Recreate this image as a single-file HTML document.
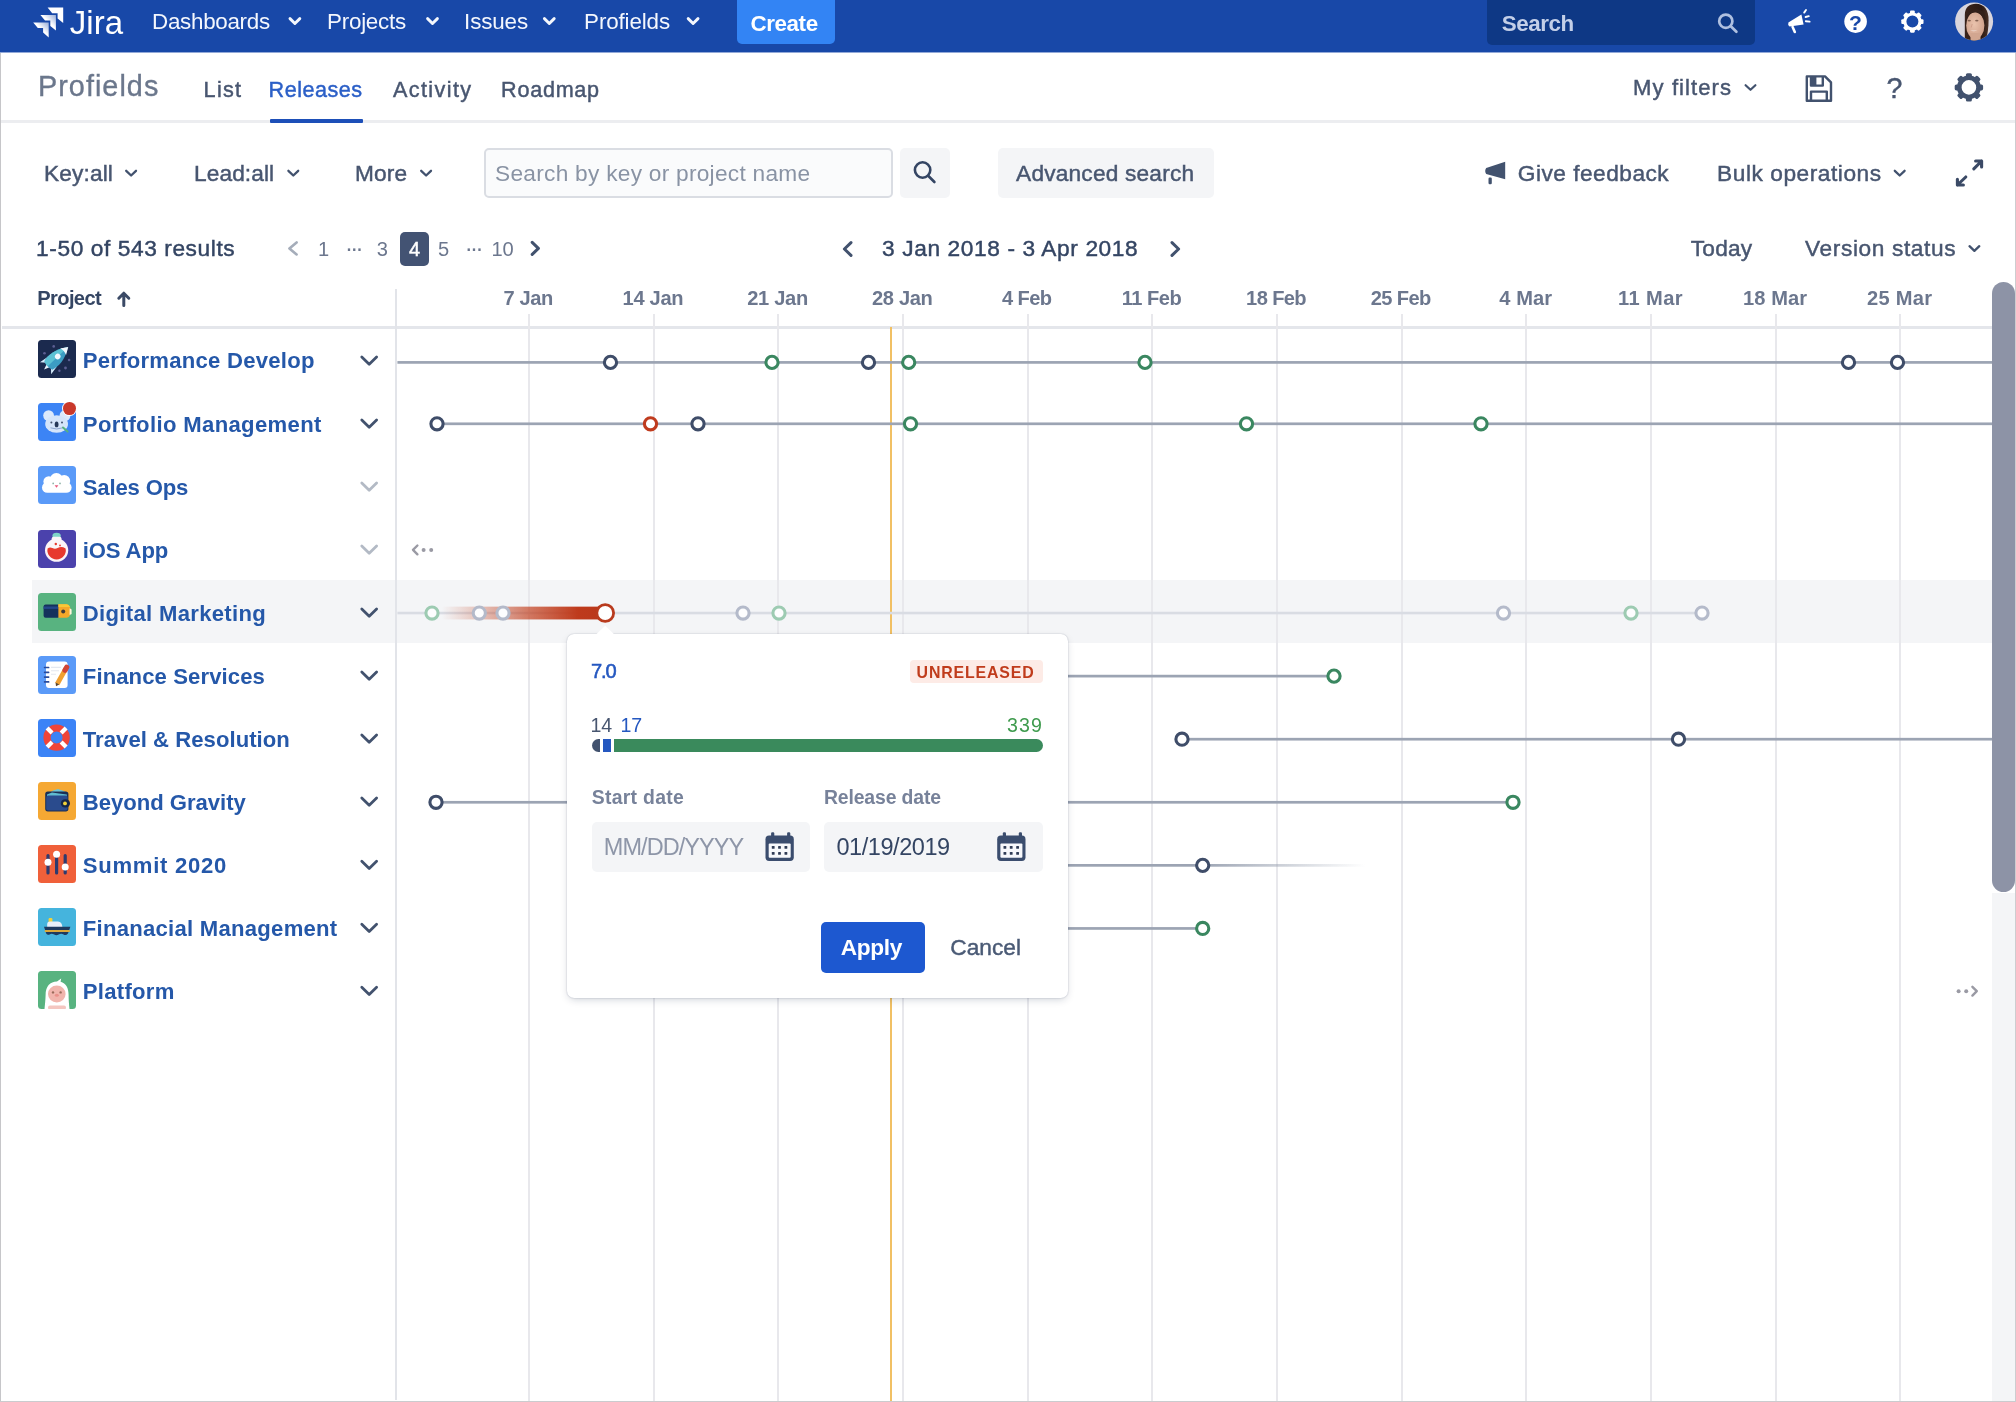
<!DOCTYPE html>
<html lang="en">
<head>
<meta charset="utf-8">
<title>Profields - Releases</title>
<style>
*{box-sizing:border-box;margin:0;padding:0}
html,body{width:2016px;height:1402px;overflow:hidden;background:#fff}
body{position:relative;font-family:"Liberation Sans",Arial,sans-serif;color:#42526E}
.t{position:absolute;white-space:pre;line-height:1;display:block;-webkit-text-stroke-color:currentColor}
.a{position:absolute}
svg{position:absolute;left:0;top:0;overflow:visible}
#nav{position:absolute;left:0;top:0;width:2016px;height:52px;background:#1848A8}
.ic{position:absolute;left:38px;width:38px;height:38px;border-radius:3.5px;overflow:hidden}
.ic svg{width:38px;height:38px}
</style>
</head>
<body>
<!-- NAV -->
<div id="nav">
 <div class="a" style="left:737px;top:0;width:98px;height:44px;background:#3384F4;border-radius:0 0 5px 5px"></div>
 <div class="a" style="left:1487px;top:0;width:267.5px;height:45px;background:#0E3885;border-radius:0 0 5px 5px"></div>
 <svg width="2016" height="52" viewBox="0 0 2016 52">
  <defs>
   <linearGradient id="jg" x1="1" y1="0" x2="0" y2="1"><stop offset="0" stop-color="#fff" stop-opacity=".55"/><stop offset=".45" stop-color="#fff" stop-opacity="1"/><stop offset="1" stop-color="#fff"/></linearGradient>
   <radialGradient id="faceg" cx=".45" cy=".45" r=".6"><stop offset="0" stop-color="#EAC3AD"/><stop offset="1" stop-color="#CFA08A"/></radialGradient><linearGradient id="hairg" x1="0" y1="0" x2="1" y2="0"><stop offset="0" stop-color="#3A231B"/><stop offset=".7" stop-color="#2A1914"/><stop offset="1" stop-color="#4A3024"/></linearGradient><clipPath id="avc"><circle cx="1974.100" cy="21.500" r="19"/></clipPath>
  </defs>
  <!-- Jira logo -->
  <g fill="#fff">
   <path d="M47.6 7.5H63.2V23L57.6 18.6V13.2H52.2Z"/>
   <path d="M40.4 15H55.9V30.5L50.3 26V20.6H45Z" fill="url(#jg)"/>
   <path d="M33.2 22.5H48.7V37.5L43.1 32.6V28.1H37.8Z" fill="url(#jg)"/>
  </g>
  <!-- chevrons -->
  <g fill="none" stroke="#F4F7FD" stroke-width="2.9" stroke-linecap="round" stroke-linejoin="round">
   <path d="M290 18.6l4.9 4.9l4.9-4.9"/>
   <path d="M427.6 18.6l4.9 4.9l4.9-4.9"/>
   <path d="M544.4 18.6l4.9 4.9l4.9-4.9"/>
   <path d="M688.2 18.6l4.9 4.9l4.9-4.9"/>
  </g>
  <!-- search icon -->
  <g fill="none" stroke="#AFC0E0" stroke-width="2.7" stroke-linecap="round">
   <circle cx="1725.8" cy="21.2" r="6.6"/><path d="M1730.8 26.2l5.6 5.6"/>
  </g>
  <!-- megaphone -->
  <path d="M1788.400 22.400L1801.400 14.600L1803.600 24.400L1789.600 26.600Q1787.400 25 1788.400 22.400Z" fill="#fff"/>
  <g fill="none" stroke="#fff" stroke-linecap="round">
   <path d="M1792.600 27L1794.800 32" stroke-width="2.600"/>
   <path d="M1804.200 12.600l1.800-2.600M1805.600 17l3.200-.8M1805.800 21.200l3.800.4" stroke-width="1.900"/>
  </g>
  <!-- help -->
  <circle cx="1855.6" cy="21.6" r="11.3" fill="#fff"/>
  <!-- gear -->
  <g transform="translate(1912.4 21.6)">
   <circle r="7.600" fill="none" stroke="#fff" stroke-width="3.200"/>
   <g fill="#fff">
    <rect x="-2.400" y="-11.100" width="4.800" height="4.200" rx="1.100"/>
    <rect x="-2.400" y="-11.100" width="4.800" height="4.200" rx="1.100" transform="rotate(45)"/>
    <rect x="-2.400" y="-11.100" width="4.800" height="4.200" rx="1.100" transform="rotate(90)"/>
    <rect x="-2.400" y="-11.100" width="4.800" height="4.200" rx="1.100" transform="rotate(135)"/>
    <rect x="-2.400" y="-11.100" width="4.800" height="4.200" rx="1.100" transform="rotate(180)"/>
    <rect x="-2.400" y="-11.100" width="4.800" height="4.200" rx="1.100" transform="rotate(225)"/>
    <rect x="-2.400" y="-11.100" width="4.800" height="4.200" rx="1.100" transform="rotate(270)"/>
    <rect x="-2.400" y="-11.100" width="4.800" height="4.200" rx="1.100" transform="rotate(315)"/>
   </g>
  </g>
  <!-- avatar -->
  <g clip-path="url(#avc)">
   <rect x="1954" y="1" width="42" height="42" fill="#D9D5DC"/>
   <path d="M1964.800 42V15C1964.800 7.500 1969.500 3.800 1976 3.800C1984 3.800 1988.600 10 1988.600 20C1988.600 28 1987.500 35 1985.500 42Z" fill="url(#hairg)"/>
   <ellipse cx="1975.300" cy="25.400" rx="9.100" ry="13.400" fill="url(#faceg)"/>
   <rect x="1970.500" y="33" width="10" height="9" fill="#D2A690"/>
   <path d="M1965.400 24C1965.600 14 1970.500 9 1977 9.300C1983.500 9.700 1986.400 15 1985.800 25C1984 17.500 1980.500 13.400 1976 12.600C1970.500 12 1966.800 16 1965.400 24Z" fill="#33201A"/>
   <ellipse cx="1969.200" cy="20.600" rx="1.700" ry=".9" fill="#5E4033" opacity=".7"/><ellipse cx="1976.800" cy="20.600" rx="1.700" ry=".9" fill="#5E4033" opacity=".7"/>
   <path d="M1971.200 27.500L1972.200 24" stroke="#C48F7C" stroke-width="1" opacity=".6"/>
   <path d="M1970.200 30q3.500 2.400 7.200 0q-3.600 1-7.200 0z" fill="#F2E4DE"/>
  </g>
 </svg>
 <span class="t" style="left:1849.4px;top:12px;font-size:21px;font-weight:700;color:#1848A8;will-change:transform">?</span>
</div>

<div class="a" style="left:0;top:52px;width:2016px;height:1px;background:#93A9D8"></div>
<!-- HEADER -->
<div class="a" style="left:0;top:119.5px;width:2016px;height:3px;background:#ECEDF0"></div>
<div class="a" style="left:269.6px;top:119px;width:93.2px;height:3.6px;background:#1D4FB8;border-radius:1px"></div>
<svg width="2016" height="130" viewBox="0 0 2016 130">
 <!-- chevron my filters -->
 <path d="M1745.6 85.2l4.900 4.600l4.900-4.600" fill="none" stroke="#42526E" stroke-width="2.2" stroke-linecap="round" stroke-linejoin="round"/>
 <!-- save icon -->
 <g fill="none" stroke="#42526E" stroke-width="2.4" stroke-linejoin="round">
  <path d="M1806.800 76.400H1825L1831 82.400V100.700H1806.800Z"/>
  <path d="M1811 76.400V85.600H1822.800V76.400"/>
  <path d="M1811 100.700V91.600H1826.800V100.700"/>
 </g>
 <rect x="1811" y="76.400" width="5.400" height="9" fill="#42526E"/>
 <!-- gear -->
 <g transform="translate(1968.900 87.400)">
  <circle r="9.600" fill="none" stroke="#42526E" stroke-width="4.600"/>
  <g fill="#42526E">
   <rect x="-3" y="-14.200" width="6" height="5" rx="1.600"/>
   <rect x="-3" y="-14.200" width="6" height="5" rx="1.600" transform="rotate(45)"/>
   <rect x="-3" y="-14.200" width="6" height="5" rx="1.600" transform="rotate(90)"/>
   <rect x="-3" y="-14.200" width="6" height="5" rx="1.600" transform="rotate(135)"/>
   <rect x="-3" y="-14.200" width="6" height="5" rx="1.600" transform="rotate(180)"/>
   <rect x="-3" y="-14.200" width="6" height="5" rx="1.600" transform="rotate(225)"/>
   <rect x="-3" y="-14.200" width="6" height="5" rx="1.600" transform="rotate(270)"/>
   <rect x="-3" y="-14.200" width="6" height="5" rx="1.600" transform="rotate(315)"/>
  </g>
 </g>
</svg>

<!-- TOOLBAR -->
<div class="a" style="left:483.5px;top:148px;width:409.5px;height:50px;background:#FAFBFC;border:2px solid #DADDE3;border-radius:5px"></div>
<div class="a" style="left:899.5px;top:148px;width:50px;height:50px;background:#F4F5F7;border-radius:5px"></div>
<div class="a" style="left:997.5px;top:148px;width:216px;height:50px;background:#F4F5F7;border-radius:5px"></div>
<div class="a" style="left:400px;top:231.5px;width:29px;height:34.5px;background:#435373;border-radius:5px"></div>
<svg width="2016" height="330" viewBox="0 0 2016 330">
 <g fill="none" stroke="#42526E" stroke-width="2.3" stroke-linecap="round" stroke-linejoin="round">
  <!-- dropdown chevrons -->
  <path d="M126.200 170.800l4.900 4.700l4.900-4.700"/>
  <path d="M288.400 170.800l4.900 4.700l4.900-4.700"/>
  <path d="M421.200 170.800l4.900 4.700l4.900-4.700"/>
  <path d="M1894.800 170.800l4.900 4.700l4.900-4.700"/>
  <path d="M1969.500 246.200l4.900 4.700l4.900-4.700"/>
 </g>
 <!-- search magnifier -->
 <g fill="none" stroke="#344563" stroke-width="2.600" stroke-linecap="round">
  <circle cx="922.600" cy="170" r="7.700"/><path d="M928.400 176l6 6"/>
 </g>
 <!-- megaphone -->
 <path d="M1486.200 168L1505.200 161.800V179.200L1486.200 174Q1484.200 171 1486.200 168Z" fill="#42526E"/>
 <rect x="1488.500" y="177.600" width="3.300" height="6.600" rx="1.200" fill="#42526E"/>
 <!-- expand -->
 <g fill="none" stroke="#3B4A66" stroke-width="3.100" stroke-linecap="round" stroke-linejoin="round">
  <path d="M1973.800 168.800L1981.600 161M1975.600 161H1981.600V167"/>
  <path d="M1965.800 177L1957.400 185M1957.400 179.200V185H1963.400"/>
 </g>
 <!-- pagination arrows -->
 <path d="M296.600 242.400L289.400 248.400L296.600 254.400" fill="none" stroke="#A5ADBA" stroke-width="2.600" stroke-linecap="round" stroke-linejoin="round"/>
 <g fill="none" stroke="#42526E" stroke-width="3" stroke-linecap="round" stroke-linejoin="round">
  <path d="M532.200 242.400L538.400 248.400L532.200 254.400"/>
  <path d="M851 242.600L844.400 249L851 255.400"/>
  <path d="M1172 242.600L1178.600 249L1172 255.400"/>
 </g>
 <!-- sort arrow -->
 <path d="M123.800 305.600V293.400M118.800 298.200L123.800 293.200L128.800 298.200" fill="none" stroke="#3B4A66" stroke-width="3" stroke-linecap="round" stroke-linejoin="round"/>
</svg>

<!-- GRID -->
<div class="a" style="left:31.7px;top:580.3px;width:1960.3px;height:62.8px;background:#F4F5F7"></div>
<div class="a" style="left:1991.7px;top:893px;width:23.3px;height:507.500px;background:#F4F5F7"></div>
<div class="a" style="left:1991.7px;top:281.8px;width:23.300px;height:610.200px;background:#8D93A6;border-radius:11.600px"></div>
<div class="a" style="left:2px;top:326.2px;width:1990px;height:2.8px;background:#E4E6EB"></div>
<div class="a" style="left:528.0px;top:314px;width:2px;height:1086.700px;background:#E8E8EC"></div>
<div class="a" style="left:652.6px;top:314px;width:2px;height:1086.700px;background:#E8E8EC"></div>
<div class="a" style="left:777.3px;top:314px;width:2px;height:1086.700px;background:#E8E8EC"></div>
<div class="a" style="left:902.0px;top:314px;width:2px;height:1086.700px;background:#E8E8EC"></div>
<div class="a" style="left:1026.6px;top:314px;width:2px;height:1086.700px;background:#E8E8EC"></div>
<div class="a" style="left:1151.2px;top:314px;width:2px;height:1086.700px;background:#E8E8EC"></div>
<div class="a" style="left:1275.9px;top:314px;width:2px;height:1086.700px;background:#E8E8EC"></div>
<div class="a" style="left:1400.6px;top:314px;width:2px;height:1086.700px;background:#E8E8EC"></div>
<div class="a" style="left:1525.2px;top:314px;width:2px;height:1086.700px;background:#E8E8EC"></div>
<div class="a" style="left:1649.9px;top:314px;width:2px;height:1086.700px;background:#E8E8EC"></div>
<div class="a" style="left:1774.5px;top:314px;width:2px;height:1086.700px;background:#E8E8EC"></div>
<div class="a" style="left:1899.2px;top:314px;width:2px;height:1086.700px;background:#E8E8EC"></div>
<div class="a" style="left:394.5px;top:288.5px;width:2.6px;height:1111px;background:#E2E4E9"></div>
<div class="a" style="left:889.9px;top:327px;width:2px;height:1073.700px;background:#F1C064"></div>

<!-- TIMELINE -->
<svg width="2016" height="1402" viewBox="0 0 2016 1402">
<defs><linearGradient id="fade9" x1="0" x2="1" y1="0" y2="0"><stop offset="0" stop-color="#9CA4B3"/><stop offset="1" stop-color="#9CA4B3" stop-opacity="0"/></linearGradient><linearGradient id="redbar" x1="0" x2="1" y1="0" y2="0"><stop offset="0" stop-color="#C2401F" stop-opacity="0"/><stop offset=".25" stop-color="#C2401F" stop-opacity=".3"/><stop offset=".55" stop-color="#C2401F" stop-opacity=".7"/><stop offset=".85" stop-color="#BE3A1C" stop-opacity="1"/><stop offset="1" stop-color="#BA381B"/></linearGradient></defs>
<rect x="397.4" y="361.05" width="1594.6" height="2.7" fill="#9CA4B3"/>
<circle cx="610.5" cy="362.40" r="6.1" fill="#fff" stroke="#3F4D69" stroke-width="3.1"/>
<circle cx="772" cy="362.40" r="6.1" fill="#fff" stroke="#3A8760" stroke-width="3.1"/>
<circle cx="868.5" cy="362.40" r="6.1" fill="#fff" stroke="#3F4D69" stroke-width="3.1"/>
<circle cx="908.7" cy="362.40" r="6.1" fill="#fff" stroke="#3A8760" stroke-width="3.1"/>
<circle cx="1145" cy="362.40" r="6.1" fill="#fff" stroke="#3A8760" stroke-width="3.1"/>
<circle cx="1848.5" cy="362.40" r="6.1" fill="#fff" stroke="#3F4D69" stroke-width="3.1"/>
<circle cx="1897.5" cy="362.40" r="6.1" fill="#fff" stroke="#3F4D69" stroke-width="3.1"/>
<rect x="437" y="422.45" width="1555.0" height="2.7" fill="#9CA4B3"/>
<circle cx="437" cy="423.80" r="6.1" fill="#fff" stroke="#3F4D69" stroke-width="3.1"/>
<circle cx="650.5" cy="423.80" r="6.1" fill="#fff" stroke="#BF3B1E" stroke-width="3.1"/>
<circle cx="698" cy="423.80" r="6.1" fill="#fff" stroke="#3F4D69" stroke-width="3.1"/>
<circle cx="910.5" cy="423.80" r="6.1" fill="#fff" stroke="#3A8760" stroke-width="3.1"/>
<circle cx="1246.5" cy="423.80" r="6.1" fill="#fff" stroke="#3A8760" stroke-width="3.1"/>
<circle cx="1481" cy="423.80" r="6.1" fill="#fff" stroke="#3A8760" stroke-width="3.1"/>
<path d="M417.4 545.5L413 549.9L417.4 554.3" fill="none" stroke="#9A9AA4" stroke-width="2.400" stroke-linecap="round" stroke-linejoin="round"/>
<circle cx="423.6" cy="549.9" r="2" fill="#9A9AA4"/><circle cx="431.2" cy="549.9" r="2" fill="#9A9AA4"/>
<rect x="397.4" y="611.74" width="1304.6" height="2.6" fill="#D9DCE3"/>
<rect x="442" y="606.64" width="160" height="12.8" fill="url(#redbar)"/>
<circle cx="432" cy="613.04" r="6.1" fill="#FDFDFE" stroke="#9DCBB2" stroke-width="3.1"/>
<circle cx="479.3" cy="613.04" r="6.1" fill="#FDFDFE" stroke="#B4BACA" stroke-width="3.1"/>
<circle cx="503" cy="613.04" r="6.1" fill="#FDFDFE" stroke="#B4BACA" stroke-width="3.1"/>
<circle cx="743" cy="613.04" r="6.1" fill="#FDFDFE" stroke="#B4BACA" stroke-width="3.1"/>
<circle cx="779" cy="613.04" r="6.1" fill="#FDFDFE" stroke="#9DCBB2" stroke-width="3.1"/>
<circle cx="1503.5" cy="613.04" r="6.1" fill="#FDFDFE" stroke="#B4BACA" stroke-width="3.1"/>
<circle cx="1631" cy="613.04" r="6.1" fill="#FDFDFE" stroke="#9DCBB2" stroke-width="3.1"/>
<circle cx="1702" cy="613.04" r="6.1" fill="#FDFDFE" stroke="#B4BACA" stroke-width="3.1"/>
<circle cx="605.2" cy="613.04" r="8.4" fill="#fff" stroke="#B93B1E" stroke-width="2.8"/>
<rect x="1000" y="674.77" width="334.0" height="2.7" fill="#9CA4B3"/>
<circle cx="1334" cy="676.12" r="6.1" fill="#fff" stroke="#3A8760" stroke-width="3.1"/>
<rect x="1182" y="737.85" width="810.0" height="2.7" fill="#9CA4B3"/>
<circle cx="1182" cy="739.20" r="6.1" fill="#fff" stroke="#3F4D69" stroke-width="3.1"/>
<circle cx="1678.5" cy="739.20" r="6.1" fill="#fff" stroke="#3F4D69" stroke-width="3.1"/>
<rect x="436" y="800.93" width="1077.0" height="2.7" fill="#9CA4B3"/>
<circle cx="436" cy="802.28" r="6.1" fill="#fff" stroke="#3F4D69" stroke-width="3.1"/>
<circle cx="1513" cy="802.28" r="6.1" fill="#fff" stroke="#3A8760" stroke-width="3.1"/>
<rect x="600" y="864.01" width="602.7" height="2.7" fill="#9CA4B3"/>
<rect x="1202" y="864.01" width="163" height="2.7" fill="url(#fade9)"/>
<circle cx="1202.7" cy="865.36" r="6.1" fill="#fff" stroke="#3F4D69" stroke-width="3.1"/>
<rect x="600" y="927.09" width="602.7" height="2.7" fill="#9CA4B3"/>
<circle cx="1202.7" cy="928.44" r="6.1" fill="#fff" stroke="#3A8760" stroke-width="3.1"/>
<path d="M1972.4 986.8L1976.8 991.2L1972.4 995.6" fill="none" stroke="#9A9AA4" stroke-width="2.400" stroke-linecap="round" stroke-linejoin="round"/>
<circle cx="1958.6" cy="991.2" r="2" fill="#9A9AA4"/><circle cx="1966.2" cy="991.2" r="2" fill="#9A9AA4"/>
</svg>

<!-- ROWS -->
<div class="ic" style="top:340.2px;background:#1B2A4E"><svg viewBox="0 0 38 38"><g fill="#5C5F92"><circle cx="15.7" cy="6.4" r="1.3"/><circle cx="6.500" cy="13.200" r="1.300"/><circle cx="31.100" cy="20" r="1.300"/><circle cx="27.500" cy="28" r="1.400"/><circle cx="21.400" cy="30.700" r="1.200"/></g>
<g transform="rotate(-43 18.4 18)">
 <path d="M3.500 9.800L13 11.400L10 17Z M3.500 26.200L13 24.600L10 19Z" fill="#D5EAF9"/>
 <path d="M1.500 18L9.500 15V21Z" fill="#EAF5FD"/>
 <path d="M7.500 12.200C14 10 24 10.800 34 18C24 25.200 14 26 7.500 23.800C6 20 6 16 7.500 12.200Z" fill="#3C9DC3"/>
 <path d="M7.500 12.200C14 10 24 10.800 34 18L6.400 18C6.300 16 6.700 14 7.500 12.200Z" fill="#5CC2D4"/>
 <path d="M27.500 13.600L34.600 18L27.500 22.400C28.700 19.600 28.700 16.400 27.500 13.600Z" fill="#F2F8FD"/>
 <circle cx="20.400" cy="17.800" r="2.800" fill="#F4F9FE"/>
</g></svg></div>
<div class="ic" style="top:403.3px;background:#3C84F5"><svg viewBox="0 0 38 38"><circle cx="10.600" cy="12.600" r="5.400" fill="#DCE9FB"/><circle cx="27" cy="12.600" r="5.400" fill="#DCE9FB"/>
<ellipse cx="18.600" cy="21" rx="11.400" ry="8.800" fill="#D5E5FA"/>
<ellipse cx="18.600" cy="21.400" rx="1.900" ry="2.900" fill="#253858"/>
<circle cx="13.400" cy="19.600" r="1" fill="#42526E"/><circle cx="24" cy="19.600" r="1" fill="#42526E"/>
<path d="M12.500 24.800Q18.600 27.200 24.700 24.800" stroke="#8DA6CF" stroke-width="1" fill="none"/>
<path d="M25 24.500L29.600 28.600" stroke="#57B27F" stroke-width="2" stroke-linecap="round"/></svg></div>
<div class="ic" style="top:466.4px;background:#5A9AF8"><svg viewBox="0 0 38 38"><g fill="#fff"><circle cx="10.800" cy="15.600" r="5.400"/><circle cx="18.400" cy="13.600" r="6.600"/><circle cx="26.200" cy="15" r="6"/>
<rect x="4" y="16.200" width="29.600" height="10.600" rx="5.300"/></g>
<circle cx="15.200" cy="17.400" r=".9" fill="#8FB3A8"/><circle cx="22" cy="17.400" r=".9" fill="#8FB3A8"/>
<path d="M16.600 19.200H20.400L18.500 21.700Z" fill="#E8577A"/></svg></div>
<div class="ic" style="top:529.5px;background:#4B42AC"><svg viewBox="0 0 38 38"><ellipse cx="18.600" cy="5.800" rx="4.200" ry="3" fill="#7FD4C8"/>
<rect x="13.800" y="6.800" width="9.600" height="7" rx="1.500" fill="#FBF4F8"/>
<circle cx="18.600" cy="20.200" r="11.600" fill="#FBF4F8"/>
<path d="M9.600 18.400Q12 16.600 14.400 18Q17 19.600 19.600 18Q23.400 16 27.600 18.400A9.200 9.200 0 1 1 9.600 18.400Z" fill="#E7392E"/>
<circle cx="17.800" cy="14" r="1.200" fill="#E7392E"/><circle cx="22" cy="15.400" r=".9" fill="#E7392E"/></svg></div>
<div class="ic" style="top:592.6px;background:#58B380"><svg viewBox="0 0 38 38"><rect x="5.600" y="11.600" width="16" height="13.200" rx="2" fill="#15315C"/>
<rect x="5.600" y="13.500" width="15" height="2.400" fill="#24488A"/>
<path d="M20.400 11.200H28.500Q32.600 11.600 32.600 18Q32.600 24.400 28.500 24.800H20.400Z" fill="#F5A82A"/>
<path d="M20.400 11.200H28.500Q31 11.400 32 14H20.400Z" fill="#F9C838"/>
<path d="M31.600 15.200L33.600 16.600V21L31.600 22Z" fill="#FFF6DC"/>
<circle cx="25.200" cy="18.400" r="2" fill="#3D3A3A"/></svg></div>
<div class="ic" style="top:655.7px;background:#5A9AF8"><svg viewBox="0 0 38 38"><rect x="8" y="5.600" width="21.600" height="26.400" rx="3" fill="#fff"/>
<g stroke="#2B4C9B" stroke-width="1.700" stroke-linecap="round"><path d="M6.600 11.500H10.600M6.600 16.300H10.600M6.600 21.100H10.600M6.600 25.900H10.600"/></g>
<g stroke="#E4E8F0" stroke-width="1.100"><path d="M13 11.400H23M13 14.800H21M13 18.200H18"/></g>
<path d="M19.200 28L28 12.400" stroke="#F0A030" stroke-width="4.800" stroke-linecap="butt"/>
<path d="M27 14.200L28.700 11.200" stroke="#D04437" stroke-width="5.200" stroke-linecap="round"/>
<path d="M18 30.200L17.600 26.600L21.200 28.600Z" fill="#5A4630"/></svg></div>
<div class="ic" style="top:718.8px;background:#3B83F6"><svg viewBox="0 0 38 38"><circle cx="18.600" cy="18.600" r="9.600" fill="none" stroke="#F04438" stroke-width="7.200"/>
<g stroke="#fff" stroke-width="4.200"><path d="M9.100 9.100L14.100 14.100M28.100 9.100L23.100 14.100M9.100 28.100L14.100 23.100M28.100 28.100L23.100 23.100"/></g></svg></div>
<div class="ic" style="top:781.9px;background:#F5A833"><svg viewBox="0 0 38 38"><path d="M10 12L15 8.400L20 7L26 9L29.400 12Z" fill="#6CC5D9"/>
<path d="M11 12L17 9.600L22 9.400L27 12Z" fill="#8ED8E0"/>
<rect x="7.200" y="9.400" width="23.200" height="20" rx="2.600" fill="#1B2F55"/>
<path d="M9 12.400L14 10.600L21 11.600L28.800 12.400V14H9Z" fill="#5FBBD0"/>
<rect x="8.200" y="13.400" width="21.400" height="15.200" rx="2" fill="#2A4B8D"/>
<rect x="22.800" y="17.200" width="9.200" height="8.400" rx="4.200" fill="#162748"/>
<circle cx="27" cy="21.400" r="1.900" fill="#F2D23A"/></svg></div>
<div class="ic" style="top:845.0px;background:#F0603A"><svg viewBox="0 0 38 38"><g stroke="#2E3A6E" stroke-width="3.200" stroke-linecap="round"><path d="M10 10.500V28M18.600 12V28M27.200 10.500V28"/></g>
<g fill="#fff"><circle cx="10" cy="17.200" r="3.500"/><circle cx="18.600" cy="9.200" r="3.500"/><circle cx="27.200" cy="22" r="3.500"/></g></svg></div>
<div class="ic" style="top:908.1px;background:#45B4DD"><svg viewBox="0 0 38 38"><rect x="10.600" y="10" width="3.800" height="5" rx="1.200" fill="#F2D23A"/>
<path d="M9.200 19V16.200Q9.200 13.600 12 13.600H20Q24 14 24.400 19Z" fill="#E8EFF9"/>
<path d="M6 18.800H32.400L30 25.400Q28 27.800 25.600 26.400Q23 25 20.600 26.600Q18.400 28 16.200 26.600Q13.800 25 11.600 26.400Q9.400 27.400 8.200 25.400Z" fill="#1E3A5F"/>
<rect x="6.800" y="22" width="25" height="2" fill="#D9A93A"/></svg></div>
<div class="ic" style="top:971.2px;background:#58B380"><svg viewBox="0 0 38 38"><path d="M6.500 38C7 33 7.500 29 7.600 24C7.600 15 12 10.600 19 10.400L23.200 7.600L22.600 10.800C28 12.400 30.600 17 30.600 24C30.600 29 31 33 31.500 38Z" fill="#fff"/>
<ellipse cx="18.800" cy="23" rx="8.800" ry="8.400" fill="#F1B5AD"/>
<circle cx="15" cy="21.400" r="1.200" fill="#9A6A5A"/><circle cx="22.600" cy="21.400" r="1.200" fill="#9A6A5A"/>
<ellipse cx="18.800" cy="24.200" rx="2" ry="1.500" fill="#E9918A"/>
<rect x="10" y="34.600" width="18" height="4" rx="2" fill="#F4C6C0"/></svg></div>
<div class="a" style="left:61.6px;top:400.6px;width:15.600px;height:15.600px;border-radius:50%;background:#fff"></div>
<div class="a" style="left:63px;top:402px;width:12.800px;height:12.800px;border-radius:50%;background:#C9392B"></div>
<svg width="420" height="1402" viewBox="0 0 420 1402"><g fill="none" stroke-width="2.800" stroke-linecap="round" stroke-linejoin="round">
<path d="M361.800 357.0L369.200 364.2L376.600 357.0" stroke="#42526E"/>
<path d="M361.800 420.0L369.200 427.2L376.600 420.0" stroke="#42526E"/>
<path d="M361.800 483.0L369.200 490.2L376.600 483.0" stroke="#B3BAC5"/>
<path d="M361.800 546.1L369.200 553.3L376.600 546.1" stroke="#B3BAC5"/>
<path d="M361.800 609.1L369.200 616.3L376.600 609.1" stroke="#42526E"/>
<path d="M361.800 672.1L369.200 679.3L376.600 672.1" stroke="#42526E"/>
<path d="M361.800 735.1L369.200 742.3L376.600 735.1" stroke="#42526E"/>
<path d="M361.800 798.1L369.200 805.3L376.600 798.1" stroke="#42526E"/>
<path d="M361.800 861.2L369.200 868.4L376.600 861.2" stroke="#42526E"/>
<path d="M361.800 924.2L369.200 931.4L376.600 924.2" stroke="#42526E"/>
<path d="M361.800 987.2L369.200 994.4L376.600 987.2" stroke="#42526E"/>
</g></svg>

<!-- POPUP -->
<div class="a" style="left:566.6px;top:634px;width:501.6px;height:364px;background:#fff;border-radius:7px;box-shadow:0 0 1.5px rgba(9,30,66,.30),0 3px 9px -2px rgba(9,30,66,.22)"></div>
<div class="a" style="left:909.6px;top:659.5px;width:133.400px;height:23.800px;background:#FDEBE6;border-radius:4px"></div>
<div class="a" style="left:591.8px;top:739.3px;width:451.200px;height:12.900px;border-radius:6.45px;overflow:hidden;background:#fff"><div class="a" style="left:0;top:0;width:8px;height:13px;background:#42526E"></div><div class="a" style="left:10.8px;top:0;width:8.200px;height:13px;background:#2558C0"></div><div class="a" style="left:21.8px;top:0;width:430px;height:13px;background:#3A8A5C"></div></div>
<div class="a" style="left:591.8px;top:822px;width:218.400px;height:50px;background:#F4F5F7;border-radius:5px"></div>
<div class="a" style="left:824px;top:822px;width:219px;height:50px;background:#F4F5F7;border-radius:5px"></div>
<div class="a" style="left:820.8px;top:922.2px;width:103.800px;height:50.400px;background:#1D58D0;border-radius:5px"></div>
<svg width="2016" height="1402" viewBox="0 0 2016 1402"><path d="M595 635.400L605.200 625.800L615.400 635.400Z" fill="#fff"/>
<g transform="translate(765.5 835.6)"><rect x="1.300" y="-3.300" width="3.200" height="6" rx="1.200" transform="translate(4.300 0)" fill="#3B4D6E"/><rect x="1.300" y="-3.300" width="3.200" height="6" rx="1.200" transform="translate(20.300 0)" fill="#3B4D6E"/><rect x="0" y="0" width="28.300" height="25.300" rx="3.600" fill="#3B4D6E"/><rect x="3.200" y="8" width="22" height="14.200" rx="1" fill="#F7F8FB"/><rect x="6.3" y="10.4" width="2.800" height="2.800" rx=".6" fill="#2F3B55"/><rect x="6.3" y="16.4" width="2.800" height="2.800" rx=".6" fill="#2F3B55"/><rect x="12.6" y="10.4" width="2.800" height="2.800" rx=".6" fill="#2F3B55"/><rect x="12.6" y="16.4" width="2.800" height="2.800" rx=".6" fill="#2F3B55"/><rect x="19.0" y="10.4" width="2.800" height="2.800" rx=".6" fill="#2F3B55"/><rect x="19.0" y="16.4" width="2.800" height="2.800" rx=".6" fill="#2F3B55"/></g>
<g transform="translate(997.2 835.6)"><rect x="1.300" y="-3.300" width="3.200" height="6" rx="1.200" transform="translate(4.300 0)" fill="#3B4D6E"/><rect x="1.300" y="-3.300" width="3.200" height="6" rx="1.200" transform="translate(20.300 0)" fill="#3B4D6E"/><rect x="0" y="0" width="28.300" height="25.300" rx="3.600" fill="#3B4D6E"/><rect x="3.200" y="8" width="22" height="14.200" rx="1" fill="#F7F8FB"/><rect x="6.3" y="10.4" width="2.800" height="2.800" rx=".6" fill="#2F3B55"/><rect x="6.3" y="16.4" width="2.800" height="2.800" rx=".6" fill="#2F3B55"/><rect x="12.6" y="10.4" width="2.800" height="2.800" rx=".6" fill="#2F3B55"/><rect x="12.6" y="16.4" width="2.800" height="2.800" rx=".6" fill="#2F3B55"/><rect x="19.0" y="10.4" width="2.800" height="2.800" rx=".6" fill="#2F3B55"/><rect x="19.0" y="16.4" width="2.800" height="2.800" rx=".6" fill="#2F3B55"/></g>
</svg>

<!-- TEXTS -->
<div class="a" style="left:0;top:0;width:2016px;height:1402px;will-change:transform">
<span class="t" style="top:6px;font-size:33px;left:69.7px;letter-spacing:0.10px;color:#fff;">Jira</span>
<span class="t" style="top:11px;font-size:22.4px;left:152.1px;letter-spacing:-0.30px;color:#F4F7FD;">Dashboards</span>
<span class="t" style="top:11px;font-size:22.4px;left:327.1px;letter-spacing:-0.27px;color:#F4F7FD;">Projects</span>
<span class="t" style="top:11px;font-size:22.4px;left:464.1px;letter-spacing:-0.14px;color:#F4F7FD;">Issues</span>
<span class="t" style="top:11px;font-size:22.4px;left:584.1px;letter-spacing:-0.14px;color:#F4F7FD;">Profields</span>
<span class="t" style="top:13px;font-size:22.4px;left:750.6px;font-weight:700;letter-spacing:-0.44px;color:#fff;">Create</span>
<span class="t" style="top:13px;font-size:22.4px;left:1501.7px;font-weight:700;letter-spacing:-0.46px;color:#C3CFE8;">Search</span>
<span class="t" style="top:72px;font-size:28.8px;left:38.0px;letter-spacing:1.03px;color:#6B778C;-webkit-text-stroke:0.35px;">Profields</span>
<span class="t" style="top:79px;font-size:21.6px;left:203.6px;letter-spacing:1.30px;color:#485670;-webkit-text-stroke:0.45px;">List</span>
<span class="t" style="top:79px;font-size:21.6px;left:268.6px;letter-spacing:0.50px;color:#2B5FC7;-webkit-text-stroke:0.45px;">Releases</span>
<span class="t" style="top:79px;font-size:21.6px;left:392.9px;letter-spacing:1.41px;color:#485670;-webkit-text-stroke:0.45px;">Activity</span>
<span class="t" style="top:79px;font-size:21.6px;left:501.1px;letter-spacing:0.73px;color:#485670;-webkit-text-stroke:0.45px;">Roadmap</span>
<span class="t" style="top:77px;font-size:22.1px;left:1633.1px;letter-spacing:1.07px;color:#485670;-webkit-text-stroke:0.45px;">My filters</span>
<span class="t" style="top:74px;font-size:28.6px;left:1886.4px;color:#485670;-webkit-text-stroke:0.4px;">?</span>
<span class="t" style="top:162px;font-size:22.7px;left:44.1px;letter-spacing:0.11px;color:#485670;-webkit-text-stroke:0.45px;">Key:all</span>
<span class="t" style="top:162px;font-size:22.7px;left:194.1px;letter-spacing:0.07px;color:#485670;-webkit-text-stroke:0.45px;">Lead:all</span>
<span class="t" style="top:162px;font-size:22.7px;left:355.1px;letter-spacing:0.10px;color:#485670;-webkit-text-stroke:0.45px;">More</span>
<span class="t" style="top:162px;font-size:22.7px;left:495.1px;letter-spacing:0.26px;color:#8993A4;">Search by key or project name</span>
<span class="t" style="top:162px;font-size:22.7px;left:1016.1px;letter-spacing:0.19px;color:#485670;-webkit-text-stroke:0.45px;">Advanced search</span>
<span class="t" style="top:162px;font-size:22.7px;left:1517.8px;letter-spacing:0.49px;color:#485670;-webkit-text-stroke:0.45px;">Give feedback</span>
<span class="t" style="top:162px;font-size:22.7px;left:1717.1px;letter-spacing:0.54px;color:#485670;-webkit-text-stroke:0.45px;">Bulk operations</span>
<span class="t" style="top:237px;font-size:22.7px;left:36.1px;letter-spacing:0.59px;color:#344563;-webkit-text-stroke:0.45px;">1-50 of 543 results</span>
<span class="t" style="top:239px;font-size:20.1px;left:318.0px;color:#6C778E;">1</span>
<span class="t" style="top:236px;font-size:24px;left:344.9px;color:#6C778E;letter-spacing:-2.7px;">···</span>
<span class="t" style="top:239px;font-size:20.1px;left:376.7px;color:#6C778E;">3</span>
<span class="t" style="top:239px;font-size:20.1px;left:408.9px;color:#fff;-webkit-text-stroke:0.45px;">4</span>
<span class="t" style="top:239px;font-size:20.1px;left:437.9px;color:#6C778E;">5</span>
<span class="t" style="top:236px;font-size:24px;left:464.8px;color:#6C778E;letter-spacing:-2.7px;">···</span>
<span class="t" style="top:239px;font-size:20.1px;left:491.4px;color:#6C778E;">10</span>
<span class="t" style="top:237px;font-size:22.7px;left:882.1px;letter-spacing:0.61px;color:#344563;-webkit-text-stroke:0.45px;">3 Jan 2018 - 3 Apr 2018</span>
<span class="t" style="top:237px;font-size:22.7px;left:1690.8px;letter-spacing:0.19px;color:#485670;-webkit-text-stroke:0.45px;">Today</span>
<span class="t" style="top:237px;font-size:22.7px;left:1805.1px;letter-spacing:0.61px;color:#485670;-webkit-text-stroke:0.45px;">Version status</span>
<span class="t" style="top:288px;font-size:20.1px;left:37.2px;font-weight:700;letter-spacing:-0.60px;color:#344563;">Project</span>
<span class="t" style="top:288px;font-size:20.1px;left:503.4px;font-weight:700;letter-spacing:-0.35px;color:#6C778E;">7 Jan</span>
<span class="t" style="top:288px;font-size:20.1px;left:622.6px;font-weight:700;letter-spacing:-0.31px;color:#6C778E;">14 Jan</span>
<span class="t" style="top:288px;font-size:20.1px;left:747.2px;font-weight:700;letter-spacing:-0.31px;color:#6C778E;">21 Jan</span>
<span class="t" style="top:288px;font-size:20.1px;left:871.9px;font-weight:700;letter-spacing:-0.31px;color:#6C778E;">28 Jan</span>
<span class="t" style="top:288px;font-size:20.1px;left:1002.0px;font-weight:700;letter-spacing:-0.62px;color:#6C778E;">4 Feb</span>
<span class="t" style="top:288px;font-size:20.1px;left:1121.7px;font-weight:700;letter-spacing:-0.51px;color:#6C778E;">11 Feb</span>
<span class="t" style="top:288px;font-size:20.1px;left:1246.1px;font-weight:700;letter-spacing:-0.63px;color:#6C778E;">18 Feb</span>
<span class="t" style="top:288px;font-size:20.1px;left:1370.8px;font-weight:700;letter-spacing:-0.63px;color:#6C778E;">25 Feb</span>
<span class="t" style="top:288px;font-size:20.1px;left:1499.2px;font-weight:700;letter-spacing:0.12px;color:#6C778E;">4 Mar</span>
<span class="t" style="top:288px;font-size:20.1px;left:1618.1px;font-weight:700;letter-spacing:0.37px;color:#6C778E;">11 Mar</span>
<span class="t" style="top:288px;font-size:20.1px;left:1743.0px;font-weight:700;letter-spacing:0.07px;color:#6C778E;">18 Mar</span>
<span class="t" style="top:288px;font-size:20.1px;left:1867.1px;font-weight:700;letter-spacing:0.27px;color:#6C778E;">25 Mar</span>
<span class="t" style="top:350px;font-size:22.1px;left:82.8px;font-weight:700;letter-spacing:0.25px;color:#2558A9;">Performance Develop</span>
<span class="t" style="top:414px;font-size:22.1px;left:82.8px;font-weight:700;letter-spacing:0.35px;color:#2558A9;">Portfolio Management</span>
<span class="t" style="top:477px;font-size:22.1px;left:82.8px;font-weight:700;letter-spacing:-0.16px;color:#2558A9;">Sales Ops</span>
<span class="t" style="top:540px;font-size:22.1px;left:82.8px;font-weight:700;letter-spacing:-0.15px;color:#2558A9;">iOS App</span>
<span class="t" style="top:603px;font-size:22.1px;left:82.8px;font-weight:700;letter-spacing:0.31px;color:#2558A9;">Digital Marketing</span>
<span class="t" style="top:666px;font-size:22.1px;left:82.8px;font-weight:700;letter-spacing:0.10px;color:#2558A9;">Finance Services</span>
<span class="t" style="top:729px;font-size:22.1px;left:82.8px;font-weight:700;letter-spacing:0.04px;color:#2558A9;">Travel &amp; Resolution</span>
<span class="t" style="top:792px;font-size:22.1px;left:82.8px;font-weight:700;letter-spacing:-0.02px;color:#2558A9;">Beyond Gravity</span>
<span class="t" style="top:855px;font-size:22.1px;left:82.8px;font-weight:700;letter-spacing:0.72px;color:#2558A9;">Summit 2020</span>
<span class="t" style="top:918px;font-size:22.1px;left:82.8px;font-weight:700;letter-spacing:0.26px;color:#2558A9;">Finanacial Management</span>
<span class="t" style="top:981px;font-size:22.1px;left:82.8px;font-weight:700;letter-spacing:0.27px;color:#2558A9;">Platform</span>
<span class="t" style="top:661px;font-size:20.1px;left:591.0px;letter-spacing:-1.12px;color:#2558C0;-webkit-text-stroke:0.55px;">7.0</span>
<span class="t" style="top:665px;font-size:15.9px;left:916.6px;font-weight:700;letter-spacing:0.85px;color:#C03C1C;">UNRELEASED</span>
<span class="t" style="top:716px;font-size:19.6px;left:590.4px;color:#485670;">14</span>
<span class="t" style="top:716px;font-size:19.6px;left:620.4px;color:#2558C0;">17</span>
<span class="t" style="top:716px;font-size:19.6px;left:1006.9px;letter-spacing:1.20px;color:#3F9B4E;">339</span>
<span class="t" style="top:788px;font-size:19.4px;left:591.7px;font-weight:700;letter-spacing:0.30px;color:#77829A;">Start date</span>
<span class="t" style="top:788px;font-size:19.4px;left:823.9px;font-weight:700;letter-spacing:-0.13px;color:#77829A;">Release date</span>
<span class="t" style="top:836px;font-size:23.5px;left:603.8px;letter-spacing:-0.94px;color:#8E96A8;">MM/DD/YYYY</span>
<span class="t" style="top:836px;font-size:23.5px;left:836.5px;letter-spacing:-0.45px;color:#344563;">01/19/2019</span>
<span class="t" style="top:936px;font-size:22.7px;left:840.7px;font-weight:700;letter-spacing:-0.31px;color:#fff;">Apply</span>
<span class="t" style="top:936px;font-size:22.7px;left:950.3px;color:#4A5A75;-webkit-text-stroke:0.45px;">Cancel</span>
</div>
<!-- FRAME -->
<div class="a" style="left:0;top:53px;width:1.2px;height:1349px;background:#C6C6C9"></div>
<div class="a" style="left:0;top:1400.7px;width:2016px;height:1.3px;background:#CBCBCE"></div>
<div class="a" style="left:2014.9px;top:53px;width:1.1px;height:1349px;background:#CDCDD0"></div>
</body>
</html>
